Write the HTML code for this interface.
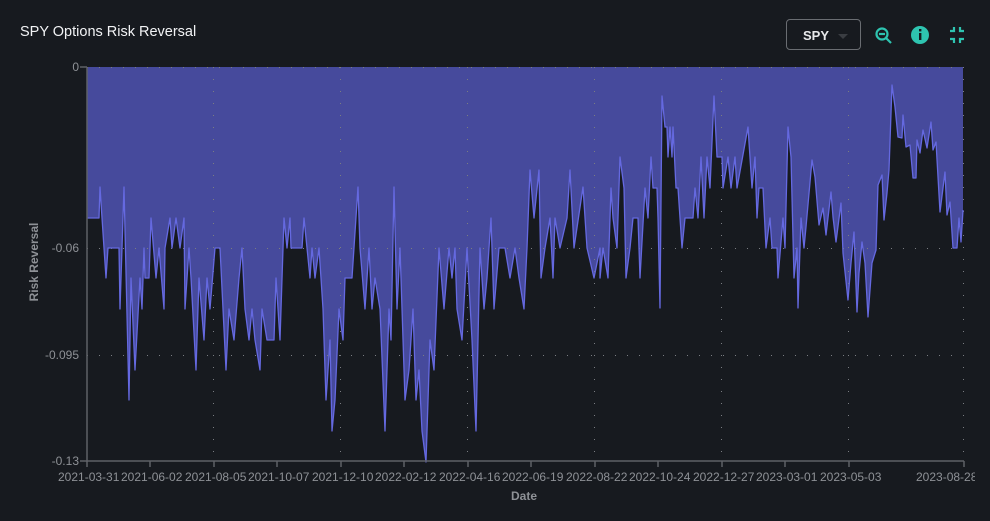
<!DOCTYPE html>
<html><head><meta charset="utf-8"><style>
html,body{margin:0;padding:0;background:#171a1f;}
body{width:990px;height:521px;overflow:hidden;position:relative;font-family:"Liberation Sans",sans-serif;}
.t{position:absolute;color:#8e9196;font-size:12px;white-space:nowrap;}
</style></head><body>
<div style="position:absolute;left:20px;top:24px;color:#f2f3f5;font-size:14.5px;">SPY Options Risk Reversal</div>
<div style="position:absolute;left:786px;top:19px;width:75px;height:31px;border:1px solid #6a6d72;border-radius:4px;box-sizing:border-box;">
<span style="position:absolute;left:16px;top:8px;color:#e8e9eb;font-size:13px;font-weight:bold;">SPY</span>
<span style="position:absolute;left:51px;top:14px;width:0;height:0;border-left:5px solid transparent;border-right:5px solid transparent;border-top:5px solid #3a3d42;"></span>
</div>
<svg style="position:absolute;left:0;top:0" width="990" height="521">
<g fill="none" stroke="#2ec4b0" stroke-width="2.2">
<circle cx="882" cy="34" r="5.5"/><line x1="886" y1="38" x2="891" y2="43"/><line x1="879" y1="34" x2="885" y2="34"/>
</g>
<circle cx="920" cy="35" r="9" fill="#2ec4b0"/>
<rect x="919" y="33" width="2.4" height="7" fill="#171a1f"/><rect x="919" y="29" width="2.4" height="2.4" fill="#171a1f"/>
<g fill="none" stroke="#2ec4b0" stroke-width="2.2">
<path d="M950 31h4v-4M960 27v4h4M950 39h4v4M960 43v-4h4"/>
</g>
<path fill="#464a9c" d="M87,67 L87,218 L99,218 L100,187 L102,218 L106,278 L108,248 L119,248 L120,309 L124,187 L129,400 L131,278 L135,370 L140,278 L142,309 L144,248 L145,278 L149,278 L151,218 L156,278 L159,248 L164,309 L165,248 L170,218 L172,248 L176,218 L180,248 L184,218 L185,309 L189,248 L191,278 L196,370 L199,278 L204,340 L207,278 L210,309 L215,248 L220,248 L226,370 L229,309 L234,340 L239,278 L242,248 L245,309 L249,340 L252,309 L255,340 L260,370 L262,309 L267,340 L274,340 L276,278 L280,340 L284,218 L287,248 L290,218 L291,248 L302,248 L304,218 L307,248 L310,278 L312,248 L315,278 L319,248 L323,309 L326,400 L330,340 L332,431 L335,400 L339,309 L343,340 L345,278 L352,278 L358,187 L360,248 L365,309 L369,248 L372,309 L375,278 L380,309 L385,431 L389,309 L391,340 L394,187 L397,309 L400,248 L405,400 L409,370 L413,309 L416,400 L419,370 L422,431 L426,462 L430,340 L434,370 L439,248 L444,309 L449,248 L452,278 L455,248 L457,309 L462,340 L467,248 L472,340 L476,431 L480,248 L484,309 L487,278 L491,218 L494,309 L499,248 L505,248 L510,278 L515,248 L519,278 L524,309 L527,248 L530,170 L534,218 L539,170 L541,278 L545,248 L550,218 L553,278 L555,218 L560,248 L567,218 L570,170 L574,248 L583,187 L587,248 L594,278 L600,248 L600,278 L603,248 L608,278 L611,188 L613,218 L617,248 L620,157 L624,188 L626,278 L630,248 L633,218 L638,218 L640,278 L645,188 L648,218 L651,157 L653,188 L657,188 L658,218 L660,308 L662,96 L665,127 L667,127 L668,157 L670,127 L672,157 L673,127 L676,188 L678,188 L680,218 L682,248 L685,218 L693,218 L695,188 L698,218 L701,157 L704,218 L707,157 L710,188 L714,96 L717,157 L722,157 L723,188 L728,157 L731,188 L735,157 L737,188 L748,127 L752,188 L755,157 L757,218 L759,188 L763,188 L766,248 L770,218 L772,248 L777,248 L778,278 L783,218 L785,248 L788,127 L791,157 L794,278 L797,248 L798,308 L801,218 L804,248 L806,227 L812,160 L815,177 L819,225 L823,208 L826,235 L831,192 L833,217 L836,242 L841,203 L843,253 L848,300 L851,263 L854,232 L857,312 L859,273 L862,242 L865,263 L868,317 L872,263 L876,250 L878,185 L882,175 L884,220 L887,193 L889,170 L892,85 L895,107 L898,137 L902,138 L903,115 L906,147 L910,145 L913,178 L916,178 L917,140 L920,153 L923,130 L927,148 L931,122 L933,150 L936,142 L940,212 L945,172 L947,215 L950,202 L953,248 L957,248 L959,218 L961,242 L963,210 L963,67 Z" stroke="none"/>
<g stroke="#7a7d82" stroke-width="1" stroke-dasharray="1 11" fill="none">
<line x1="87" y1="248.5" x2="963" y2="248.5"/><line x1="87" y1="355.5" x2="963" y2="355.5"/>
<line x1="213.5" y1="67" x2="213.5" y2="461"/><line x1="340.5" y1="67" x2="340.5" y2="461"/><line x1="467.5" y1="67" x2="467.5" y2="461"/><line x1="594.5" y1="67" x2="594.5" y2="461"/><line x1="721.5" y1="67" x2="721.5" y2="461"/><line x1="848.5" y1="67" x2="848.5" y2="461"/><line x1="963.5" y1="67" x2="963.5" y2="461"/>
<line x1="87" y1="67.5" x2="963" y2="67.5"/>
</g>
<path fill="none" stroke="#6569e0" stroke-width="1.3" stroke-linejoin="round" d="M87,218 L99,218 L100,187 L102,218 L106,278 L108,248 L119,248 L120,309 L124,187 L129,400 L131,278 L135,370 L140,278 L142,309 L144,248 L145,278 L149,278 L151,218 L156,278 L159,248 L164,309 L165,248 L170,218 L172,248 L176,218 L180,248 L184,218 L185,309 L189,248 L191,278 L196,370 L199,278 L204,340 L207,278 L210,309 L215,248 L220,248 L226,370 L229,309 L234,340 L239,278 L242,248 L245,309 L249,340 L252,309 L255,340 L260,370 L262,309 L267,340 L274,340 L276,278 L280,340 L284,218 L287,248 L290,218 L291,248 L302,248 L304,218 L307,248 L310,278 L312,248 L315,278 L319,248 L323,309 L326,400 L330,340 L332,431 L335,400 L339,309 L343,340 L345,278 L352,278 L358,187 L360,248 L365,309 L369,248 L372,309 L375,278 L380,309 L385,431 L389,309 L391,340 L394,187 L397,309 L400,248 L405,400 L409,370 L413,309 L416,400 L419,370 L422,431 L426,462 L430,340 L434,370 L439,248 L444,309 L449,248 L452,278 L455,248 L457,309 L462,340 L467,248 L472,340 L476,431 L480,248 L484,309 L487,278 L491,218 L494,309 L499,248 L505,248 L510,278 L515,248 L519,278 L524,309 L527,248 L530,170 L534,218 L539,170 L541,278 L545,248 L550,218 L553,278 L555,218 L560,248 L567,218 L570,170 L574,248 L583,187 L587,248 L594,278 L600,248 L600,278 L603,248 L608,278 L611,188 L613,218 L617,248 L620,157 L624,188 L626,278 L630,248 L633,218 L638,218 L640,278 L645,188 L648,218 L651,157 L653,188 L657,188 L658,218 L660,308 L662,96 L665,127 L667,127 L668,157 L670,127 L672,157 L673,127 L676,188 L678,188 L680,218 L682,248 L685,218 L693,218 L695,188 L698,218 L701,157 L704,218 L707,157 L710,188 L714,96 L717,157 L722,157 L723,188 L728,157 L731,188 L735,157 L737,188 L748,127 L752,188 L755,157 L757,218 L759,188 L763,188 L766,248 L770,218 L772,248 L777,248 L778,278 L783,218 L785,248 L788,127 L791,157 L794,278 L797,248 L798,308 L801,218 L804,248 L806,227 L812,160 L815,177 L819,225 L823,208 L826,235 L831,192 L833,217 L836,242 L841,203 L843,253 L848,300 L851,263 L854,232 L857,312 L859,273 L862,242 L865,263 L868,317 L872,263 L876,250 L878,185 L882,175 L884,220 L887,193 L889,170 L892,85 L895,107 L898,137 L902,138 L903,115 L906,147 L910,145 L913,178 L916,178 L917,140 L920,153 L923,130 L927,148 L931,122 L933,150 L936,142 L940,212 L945,172 L947,215 L950,202 L953,248 L957,248 L959,218 L961,242 L963,210"/>
<g stroke="#5e6166" stroke-width="1.5" fill="none">
<line x1="87" y1="67" x2="87" y2="462"/><line x1="80" y1="67" x2="87" y2="67"/><line x1="80" y1="461" x2="964" y2="461"/>
<path d="M87 461v6M150 461v6M214 461v6M277 461v6M341 461v6M404 461v6M468 461v6M531 461v6M595 461v6M658 461v6M722 461v6M785 461v6M849 461v6M964 461v6"/>
</g>
</svg>
<div class="t" style="right:911px;top:60px;">0</div>
<div class="t" style="right:911px;top:241px;">-0.06</div>
<div class="t" style="right:911px;top:348px;">-0.095</div>
<div class="t" style="right:911px;top:454px;">-0.13</div>
<div class="t" style="left:58px;top:470px;">2021-03-31</div>
<div class="t" style="left:121px;top:470px;">2021-06-02</div>
<div class="t" style="left:185px;top:470px;">2021-08-05</div>
<div class="t" style="left:248px;top:470px;">2021-10-07</div>
<div class="t" style="left:312px;top:470px;">2021-12-10</div>
<div class="t" style="left:375px;top:470px;">2022-02-12</div>
<div class="t" style="left:439px;top:470px;">2022-04-16</div>
<div class="t" style="left:502px;top:470px;">2022-06-19</div>
<div class="t" style="left:566px;top:470px;">2022-08-22</div>
<div class="t" style="left:629px;top:470px;">2022-10-24</div>
<div class="t" style="left:693px;top:470px;">2022-12-27</div>
<div class="t" style="left:756px;top:470px;">2023-03-01</div>
<div class="t" style="left:820px;top:470px;">2023-05-03</div>
<div class="t" style="left:916px;top:470px;width:59px;overflow:hidden;">2023-08-28</div>
<div class="t" style="left:511px;top:489px;font-weight:bold;">Date</div>
<div class="t" style="left:-6px;top:255px;font-weight:bold;transform:rotate(-90deg);transform-origin:center;width:80px;text-align:center;">Risk Reversal</div>
</body></html>
